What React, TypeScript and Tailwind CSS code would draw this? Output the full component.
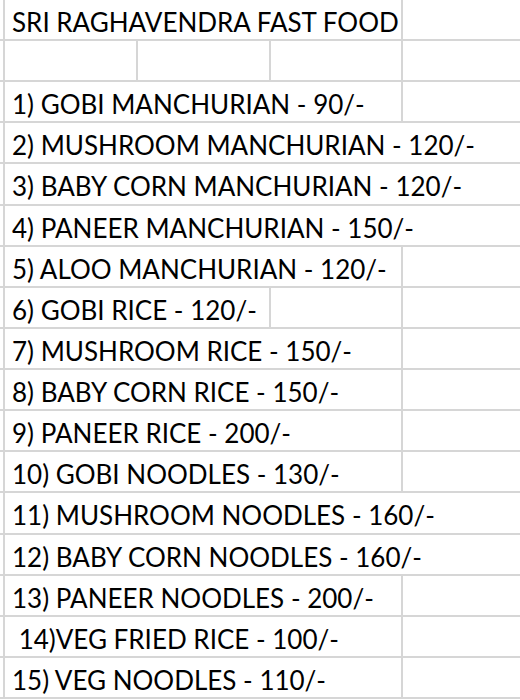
import React from "react";

type RowSpec = { text: string; span: number };

const rows: RowSpec[] = [
  { text: "", span: 1 },
  { text: "1) GOBI MANCHURIAN - 90/-", span: 3 },
  { text: "2) MUSHROOM MANCHURIAN - 120/-", span: 4 },
  { text: "3) BABY CORN MANCHURIAN - 120/-", span: 4 },
  { text: "4) PANEER MANCHURIAN - 150/-", span: 4 },
  { text: "5) ALOO MANCHURIAN - 120/-", span: 3 },
  { text: "6) GOBI RICE - 120/-", span: 2 },
  { text: "7) MUSHROOM RICE - 150/-", span: 3 },
  { text: "8) BABY CORN RICE - 150/-", span: 3 },
  { text: "9) PANEER RICE - 200/-", span: 3 },
  { text: "10) GOBI NOODLES - 130/-", span: 3 },
  { text: "11) MUSHROOM NOODLES - 160/-", span: 4 },
  { text: "12) BABY CORN NOODLES - 160/-", span: 4 },
  { text: "13) PANEER NOODLES - 200/-", span: 3 },
  { text: " 14)VEG FRIED RICE - 100/-", span: 3 },
  { text: "15) VEG NOODLES - 110/-", span: 3 },
];

const cellText =
  "whitespace-pre overflow-visible pl-[7px] pt-[9px] text-[26px] leading-[26px] text-black";

function Row({ text, span, first }: { text: string; span: number; first?: boolean }) {
  const h = first ? "h-[41px]" : "h-[41.125px]";
  return (
    <div className={`flex ${h} border-b-2 border-[#d6d6d6]`}>
      <div className="w-[5px] shrink-0 border-r-2 border-[#d6d6d6]" />
      {span === 1 && (
        <>
          <div className={`w-[133px] shrink-0 border-r-2 border-[#d6d6d6] ${cellText}`}>{text}</div>
          <div className="w-[133px] shrink-0 border-r-2 border-[#d6d6d6]" />
          <div className="w-[132px] shrink-0 border-r-2 border-[#d6d6d6]" />
          <div className="flex-1" />
        </>
      )}
      {span === 2 && (
        <>
          <div className={`w-[266px] shrink-0 border-r-2 border-[#d6d6d6] ${cellText}`}>{text}</div>
          <div className="w-[132px] shrink-0 border-r-2 border-[#d6d6d6]" />
          <div className="flex-1" />
        </>
      )}
      {span === 3 && (
        <>
          <div className={`w-[398px] shrink-0 border-r-2 border-[#d6d6d6] ${cellText}`}>{text}</div>
          <div className="flex-1" />
        </>
      )}
      {span === 4 && <div className={`flex-1 ${cellText}`}>{text}</div>}
    </div>
  );
}

export default function App() {
  return (
    <div
      className="w-[520px] h-[700px] overflow-hidden bg-white"
      style={{ fontFamily: "Lato, 'Open Sans', sans-serif" }}
    >
      <Row text="SRI RAGHAVENDRA FAST FOOD" span={3} first />
      {rows.map((r, i) => (
        <Row key={i} text={r.text} span={r.span} />
      ))}
    </div>
  );
}
